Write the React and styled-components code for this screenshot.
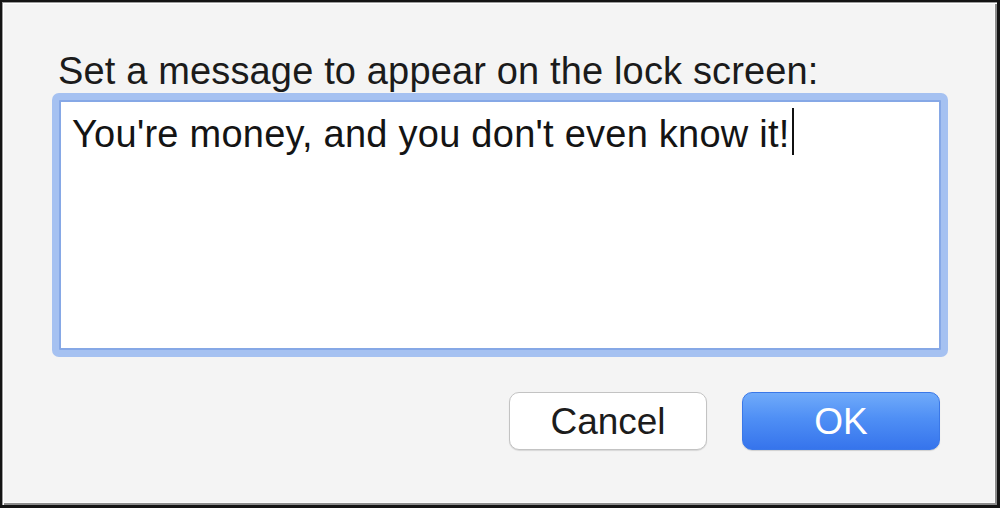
import React from "react";
import styled, { createGlobalStyle } from "styled-components";

const Global = createGlobalStyle`
  html, body { margin: 0; padding: 0; background: #f4f4f4; }
  * { box-sizing: border-box; }
`;

const Frame = styled.div`
  width: 1000px;
  height: 508px;
  background: #f4f4f4;
  border-style: solid;
  border-color: #141414;
  border-width: 2px 3px 3px 2px;
  box-shadow:
    inset 1px 1px 0 #9c9c9c,
    inset 2px 2px 0 #ffffff,
    inset -2px -2px 0 #8c8c8c,
    inset -3px -3px 0 #fbfbfb;
  padding: 50px 49px 0 50px;
  display: flex;
  flex-direction: column;
  font-family: "Liberation Sans", Arial, sans-serif;
  color: #1b1b1b;
`;

const Label = styled.div`
  font-size: 38px;
  line-height: 38px;
  letter-spacing: 0.15px;
  padding-left: 6px;
  white-space: nowrap;
`;

const FieldRing = styled.div`
  margin-top: 3px;
  padding: 7px;
  border-radius: 7px;
  background: #a5c1f1;
`;

const TextField = styled.div`
  height: 250px;
  background: #ffffff;
  border: 2px solid #86a8e6;
  border-radius: 1px;
  padding: 13px 11px;
  font-size: 38px;
  line-height: 38px;
  letter-spacing: 0.25px;
  color: #141414;
  white-space: pre-wrap;
`;

const Caret = styled.span`
  display: inline-block;
  position: relative;
  width: 2px;
  height: 0;
  margin-left: 2px;
  &::before {
    content: "";
    position: absolute;
    left: 0;
    top: -39px;
    width: 2px;
    height: 47px;
    background: #111;
  }
`;

const ButtonRow = styled.div`
  display: flex;
  justify-content: flex-end;
  gap: 35px;
  margin-top: 35px;
  padding-right: 8px;
`;

const Button = styled.button`
  width: 198px;
  height: 58px;
  border-radius: 10px;
  font-family: "Liberation Sans", Arial, sans-serif;
  font-size: 37px;
  line-height: 37px;
  display: flex;
  align-items: center;
  justify-content: center;
  padding: 0;
  cursor: default;
  ${({ $primary }) =>
    $primary
      ? `
    color: #ffffff;
    border: 1px solid #3a78e8;
    background: linear-gradient(to bottom, #70abfa 0%, #4f8ff5 45%, #3674ec 100%);
    box-shadow: 0 1px 1px rgba(0,0,0,0.15);
  `
      : `
    color: #1c1c1c;
    border: 1px solid #c3c3c3;
    background: #ffffff;
    box-shadow: 0 1px 1px rgba(0,0,0,0.12);
  `}
`;

export default function App() {
  return (
    <>
      <Global />
      <Frame>
        <Label>Set a message to appear on the lock screen:</Label>
        <FieldRing>
          <TextField>
            You're money, and you don't even know it!
            <Caret />
          </TextField>
        </FieldRing>
        <ButtonRow>
          <Button>Cancel</Button>
          <Button $primary>OK</Button>
        </ButtonRow>
      </Frame>
    </>
  );
}
